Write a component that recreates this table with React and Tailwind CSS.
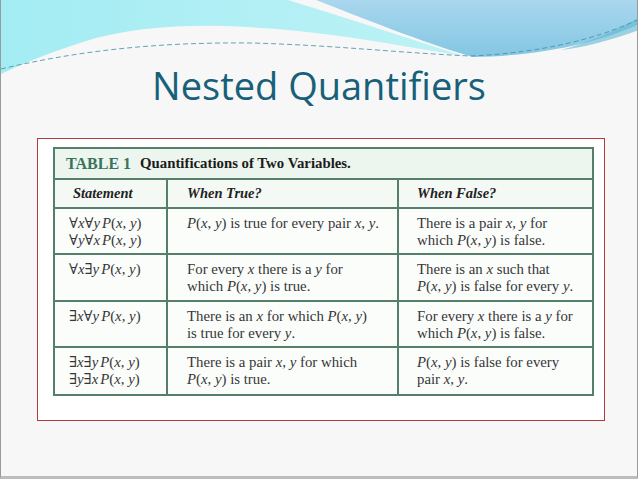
import React from "react";

const serif = { fontFamily: '"Liberation Serif", "DejaVu Serif", serif' };

const I = ({ children }) => <i>{children}</i>;
const Pxy = () => (
  <>
    <I>P</I>(<I>x</I>, <I>y</I>)
  </>
);
const Q = ({ a, b, c, d }) => (
  <span>
    {a}
    <I>{b}</I>
    {c}
    <I>{d}</I>
    <span className="ml-[2px]">
      <Pxy />
    </span>
  </span>
);

const rows = [
  {
    s: [<Q key="1" a="∀" b="x" c="∀" d="y" />, <Q key="2" a="∀" b="y" c="∀" d="x" />],
    t: [<><Pxy /> is true for every pair <I>x</I>, <I>y</I>.</>],
    f: [<>There is a pair <I>x</I>, <I>y</I> for</>, <>which <Pxy /> is false.</>],
    h: "h-[46px]",
  },
  {
    s: [<Q key="1" a="∀" b="x" c="∃" d="y" />],
    t: [<>For every <I>x</I> there is a <I>y</I> for</>, <>which <Pxy /> is true.</>],
    f: [<>There is an <I>x</I> such that</>, <><Pxy /> is false for every <I>y</I>.</>],
    h: "h-[47px]",
  },
  {
    s: [<Q key="1" a="∃" b="x" c="∀" d="y" />],
    t: [<>There is an <I>x</I> for which <Pxy /></>, <>is true for every <I>y</I>.</>],
    f: [<>For every <I>x</I> there is a <I>y</I> for</>, <>which <Pxy /> is false.</>],
    h: "h-[46px]",
  },
  {
    s: [<Q key="1" a="∃" b="x" c="∃" d="y" />, <Q key="2" a="∃" b="y" c="∃" d="x" />],
    t: [<>There is a pair <I>x</I>, <I>y</I> for which</>, <><Pxy /> is true.</>],
    f: [<><Pxy /> is false for every</>, <>pair <I>x</I>, <I>y</I>.</>],
    h: "h-[46px]",
  },
];

const Lines = ({ items }) => (
  <div className="flex flex-col">
    {items.map((x, i) => (
      <div key={i} className="whitespace-nowrap leading-[17px]">
        {x}
      </div>
    ))}
  </div>
);

export default function App() {
  return (
    <div className="relative w-[638px] h-[479px] overflow-hidden bg-[#f7f7f7] border-l border-r border-[#9a9a9a] border-b-[3px] border-b-[#bdbdbd]">
      <svg
        className="absolute top-0 left-0"
        width="638"
        height="80"
        viewBox="0 0 638 80"
      >
        <defs>
          <linearGradient id="cy" x1="0" y1="0" x2="1" y2="0">
            <stop offset="0" stopColor="#a3ecf3" />
            <stop offset="1" stopColor="#bdf2f6" />
          </linearGradient>
          <linearGradient id="bl" x1="0" y1="0" x2="0" y2="1">
            <stop offset="0" stopColor="#a9d7ee" />
            <stop offset="1" stopColor="#84c6e2" />
          </linearGradient>
        </defs>
        <path
          d="M0 0 H287 C340 16 400 36 462 56 C400 46 330 32 260 28 C200 23 140 26 95 38 C55 50 25 62 0 74 Z"
          fill="url(#cy)"
        />
        <path
          d="M315 0 H638 V24 C600 42 540 56 472 57 C420 42 362 18 315 0 Z"
          fill="url(#bl)"
        />
        <path
          d="M560 50 C590 42 615 30 638 18 V30 C610 40 585 47 560 50 Z"
          fill="#5fb8d4"
          opacity="0.6"
        />
        <path
          d="M0 69 C80 50 160 42 250 43 C330 45 400 53 470 56 C540 53 600 38 638 19"
          stroke="#3f8f9e"
          strokeWidth="1"
          strokeDasharray="5 3"
          fill="none"
          opacity="0.8"
        />
      </svg>

      <div className="relative flex flex-col">
        <div
          className="mt-[64px] h-[42px] text-center text-[38px] leading-[42px] text-[#17607a]"
          style={{ fontFamily: '"Open Sans", sans-serif' }}
        >
          Nested Quantifiers
        </div>

        <div className="ml-[36px] mt-[32px] w-[568px] h-[283px] border border-[#b23a3a] bg-white">
          <div
            className="ml-[15px] mt-[8px] w-[541px] border-2 border-[#557f6b] text-[14.8px] text-[#363636]"
            style={serif}
          >
            <div className="h-[31px] border-b-2 border-[#557f6b] bg-[#edf5ef] flex items-center pl-[11px] font-bold">
              <span className="text-[16px] text-[#3a735c] mr-[9px]">TABLE 1</span>
              <span className="text-[#1c1c1c] text-[14.8px]">Quantifications of Two Variables.</span>
            </div>
            <div className="h-[29px] border-b-2 border-[#557f6b] bg-[#f4f9f5] grid grid-cols-[113px_231px_1fr] font-bold italic text-[#222] text-[14.5px]">
              <div className="border-r-2 border-[#557f6b] flex items-center pl-[18px]">Statement</div>
              <div className="border-r-2 border-[#557f6b] flex items-center pl-[19px]">When True?</div>
              <div className="flex items-center pl-[18px]">When False?</div>
            </div>
            {rows.map((r, i) => (
              <div
                key={i}
                className={`${r.h} ${i < rows.length - 1 ? "border-b-2" : ""} border-[#557f6b] bg-[#fbfdfb] grid grid-cols-[113px_231px_1fr]`}
              >
                <div className="border-r-2 border-[#557f6b] pt-[6px] pl-[14px]">
                  <Lines items={r.s} />
                </div>
                <div className="border-r-2 border-[#557f6b] pt-[6px] pl-[19px]">
                  <Lines items={r.t} />
                </div>
                <div className="pt-[6px] pl-[18px]">
                  <Lines items={r.f} />
                </div>
              </div>
            ))}
          </div>
        </div>
      </div>
    </div>
  );
}
